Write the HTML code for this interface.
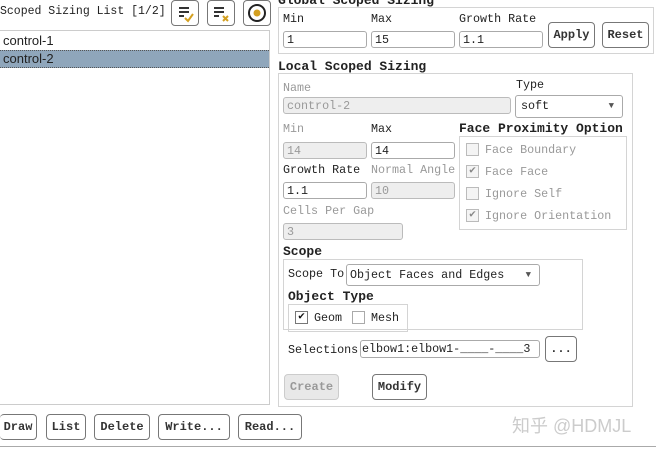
<!DOCTYPE html>
<html><head><style>
body{margin:0;width:658px;height:452px;background:#fff;position:relative;overflow:hidden;font-family:"Liberation Mono",monospace;font-size:11.7px;color:#222}
.a{position:absolute;white-space:nowrap}
.in{position:absolute;border:1px solid #aaa;border-radius:3px;background:#fff;height:17px;line-height:17px;padding-left:3px;box-sizing:border-box;font-size:11.7px}
.dis{background:#eee;color:#999;border-color:#bbb}
.grp{position:absolute;border:1px solid #d4d4d4}
.b{font-weight:bold;font-size:13px}
.btn{position:absolute;border:1px solid #777;border-radius:4px;background:#fff;box-sizing:border-box;text-align:center;font-weight:bold;font-size:12px;color:#333}
.cb{position:absolute;width:13px;height:13px;border:1px solid #bbb;background:#f4f4f4;box-sizing:border-box;font-size:11px;line-height:11px;text-align:center;color:#888}
.g{color:#999}
</style></head><body>
<div class="a" style="left:0;top:5px;font-size:11.5px">Scoped Sizing List [1/2]</div>
<div class="btn" style="left:171px;top:0;width:28px;height:26px"><svg width="26" height="24"><path d="M7 7h10M7 11h10M7 15h5" stroke="#333" stroke-width="2"/><path d="M13 17l3 3 5-7" stroke="#d4a020" stroke-width="2" fill="none"/></svg></div>
<div class="btn" style="left:207px;top:0;width:28px;height:26px"><svg width="26" height="24"><path d="M6 7h10M6 11h10M6 15h5" stroke="#333" stroke-width="2"/><path d="M15 15l5 5M20 15l-5 5" stroke="#d4a020" stroke-width="2"/></svg></div>
<div class="btn" style="left:243px;top:0;width:28px;height:26px"><svg width="26" height="24"><circle cx="13" cy="12" r="8" stroke="#222" stroke-width="2" fill="none"/><circle cx="13" cy="12" r="3.5" fill="#d4a020"/></svg></div>
<div class="a" style="left:0;top:30px;width:270px;height:375px;border:1px solid #ccc;border-left:none;box-sizing:border-box"></div>
<div class="a" style="left:3px;top:33px;font-family:'Liberation Sans',sans-serif;font-size:13px">control-1</div>
<div class="a" style="left:0;top:50px;width:269px;height:18px;background:#8fa6bb;border-top:1px dotted #555;border-bottom:1px dotted #555;box-sizing:border-box"></div>
<div class="a" style="left:3px;top:51px;font-family:'Liberation Sans',sans-serif;font-size:13px">control-2</div>

<div class="a b" style="left:278px;top:-7px">Global Scoped Sizing</div>
<div class="grp" style="left:278px;top:7px;width:374px;height:45px"></div>
<div class="a" style="left:283px;top:12px">Min</div>
<div class="a" style="left:371px;top:12px">Max</div>
<div class="a" style="left:459px;top:12px">Growth Rate</div>
<div class="in" style="left:283px;top:31px;width:84px">1</div>
<div class="in" style="left:371px;top:31px;width:84px">15</div>
<div class="in" style="left:459px;top:31px;width:84px">1.1</div>
<div class="btn" style="left:548px;top:22px;width:47px;height:26px;line-height:24px">Apply</div>
<div class="btn" style="left:602px;top:22px;width:47px;height:26px;line-height:24px">Reset</div>

<div class="a b" style="left:278px;top:59px">Local Scoped Sizing</div>
<div class="grp" style="left:278px;top:73px;width:353px;height:332px"></div>
<div class="a g" style="left:283px;top:81px">Name</div>
<div class="in dis" style="left:283px;top:97px;width:228px">control-2</div>
<div class="a" style="left:516px;top:78px">Type</div>
<div class="in" style="left:515px;top:95px;width:108px;height:23px;line-height:21px;padding-left:5px">soft<span style="position:absolute;right:8px;top:0;font-size:9px;color:#555">▼</span></div>
<div class="a g" style="left:283px;top:122px">Min</div>
<div class="a" style="left:371px;top:122px">Max</div>
<div class="in dis" style="left:283px;top:142px;width:84px">14</div>
<div class="in" style="left:371px;top:142px;width:84px">14</div>
<div class="a" style="left:283px;top:163px">Growth Rate</div>
<div class="a g" style="left:371px;top:163px">Normal Angle</div>
<div class="in" style="left:283px;top:182px;width:84px">1.1</div>
<div class="in dis" style="left:371px;top:182px;width:84px">10</div>
<div class="a g" style="left:283px;top:204px">Cells Per Gap</div>
<div class="in dis" style="left:283px;top:223px;width:120px">3</div>
<div class="a b" style="left:459px;top:121px">Face Proximity Option</div>
<div class="grp" style="left:459px;top:136px;width:166px;height:92px"></div>
<div class="cb" style="left:466px;top:143px"></div><div class="a g" style="left:485px;top:143px">Face Boundary</div>
<div class="cb" style="left:466px;top:165px">✔</div><div class="a g" style="left:485px;top:165px">Face Face</div>
<div class="cb" style="left:466px;top:187px"></div><div class="a g" style="left:485px;top:187px">Ignore Self</div>
<div class="cb" style="left:466px;top:209px">✔</div><div class="a g" style="left:485px;top:209px">Ignore Orientation</div>

<div class="a b" style="left:283px;top:244px">Scope</div>
<div class="grp" style="left:283px;top:259px;width:298px;height:69px"></div>
<div class="a" style="left:288px;top:267px">Scope To</div>
<div class="in" style="left:346px;top:264px;width:194px;height:22px;line-height:20px">Object Faces and Edges<span style="position:absolute;right:8px;top:0;font-size:9px;color:#555">▼</span></div>
<div class="a b" style="left:288px;top:289px">Object Type</div>
<div class="grp" style="left:288px;top:304px;width:118px;height:26px"></div>
<div class="cb" style="left:295px;top:311px;border-color:#777;background:#fff;color:#111">✔</div><div class="a" style="left:314px;top:311px">Geom</div>
<div class="cb" style="left:352px;top:311px;border-color:#aaa;background:#fff"></div><div class="a" style="left:371px;top:311px">Mesh</div>
<div class="a" style="left:288px;top:343px">Selections</div>
<div class="in" style="left:360px;top:340px;width:180px;height:18px;padding-left:1px">elbow1:elbow1-____-____3</div>
<div class="btn" style="left:545px;top:336px;width:32px;height:26px;line-height:24px">...</div>
<div class="btn" style="left:284px;top:374px;width:55px;height:26px;line-height:24px;background:#e8e8e8;color:#999;border-color:#ccc">Create</div>
<div class="btn" style="left:372px;top:374px;width:55px;height:26px;line-height:24px">Modify</div>

<div class="btn" style="left:0;top:414px;width:37px;height:26px;line-height:24px;border-left:none">Draw</div>
<div class="btn" style="left:46px;top:414px;width:40px;height:26px;line-height:24px">List</div>
<div class="btn" style="left:94px;top:414px;width:56px;height:26px;line-height:24px">Delete</div>
<div class="btn" style="left:158px;top:414px;width:72px;height:26px;line-height:24px">Write...</div>
<div class="btn" style="left:238px;top:414px;width:64px;height:26px;line-height:24px">Read...</div>
<div class="a" style="left:512px;top:412px;font-family:'Liberation Sans','Noto Sans CJK SC',sans-serif;font-size:18px;color:#ccc">知乎 @HDMJL</div>
<div class="a" style="left:0;top:446px;width:656px;height:1px;background:#aaa"></div>
</body></html>
